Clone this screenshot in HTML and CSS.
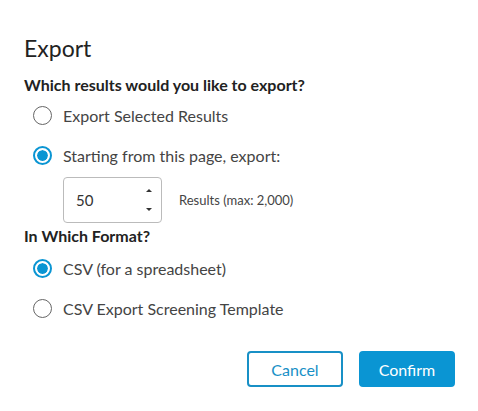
FILE: index.html
```html
<!DOCTYPE html>
<html>
<head>
<meta charset="utf-8">
<link rel="stylesheet" href="styles.css">
</head>
<body>
<div class="dialog">
  <h2 class="title">Export</h2>
  <div class="question">Which results would you like to export?</div>
  <div class="options">
    <label class="opt"><span class="radio"></span><span class="lbl">Export Selected Results</span></label>
    <label class="opt"><span class="radio on"></span><span class="lbl">Starting from this page, export:</span></label>
  </div>
  <div class="count-row">
    <div class="num">
      <span class="val">50</span>
      <span class="spin">
        <svg width="8" height="5" viewBox="0 0 8 5"><path d="M4 1 L7 4 L1 4 Z" fill="#333"/></svg>
        <svg width="8" height="5" viewBox="0 0 8 5"><path d="M1 1 L7 1 L4 4 Z" fill="#333"/></svg>
      </span>
    </div>
    <span class="hint">Results (max: 2,000)</span>
  </div>
  <div class="question q2">In Which Format?</div>
  <div class="options fmt">
    <label class="opt"><span class="radio on"></span><span class="lbl">CSV (for a spreadsheet)</span></label>
    <label class="opt"><span class="radio"></span><span class="lbl">CSV Export Screening Template</span></label>
  </div>
  <div class="actions">
    <button class="btn ghost">Cancel</button>
    <button class="btn primary">Confirm</button>
  </div>
</div>
</body>
</html>
```
FILE: styles.css
```css
* { box-sizing: border-box; }
html, body { margin: 0; padding: 0; background: #fff; }
body { font-family: Lato, "Open Sans", sans-serif; color: #333; }
.dialog { width: 478px; height: 411px; padding: 33px 23px 24px 24px; display: flex; flex-direction: column; }
.title { margin: 0; font-size: 23px; font-weight: 400; color: #222; line-height: 30px; }
.question { margin-top: 12px; font-size: 16px; font-weight: 700; color: #222; line-height: 20px; }
.options { display: flex; flex-direction: column; }
.fmt { margin-top: 2px; }
.opt { display: flex; align-items: center; gap: 11px; height: 40px; padding-left: 9px; font-size: 16px; color: #444; }
.radio { width: 19px; height: 19px; border: 1.5px solid #666; border-radius: 50%; flex: none; }
.radio.on { border: 2px solid #0a95d3; padding: 2px; background: #0a95d3; background-clip: content-box; box-shadow: inset 0 0 0 2px #fff; }
.count-row { display: flex; align-items: center; gap: 17px; padding-left: 39px; margin-top: 2px; }
.num { width: 99px; height: 46px; flex: none; border: 1px solid #bbb; border-radius: 4px; display: flex; align-items: center; justify-content: space-between; padding: 0 8px 0 12px; }
.val { font-size: 15px; color: #333; }
.spin { display: flex; flex-direction: column; gap: 14px; }
.hint { font-size: 13px; color: #444; }
.q2 { margin-top: 3px; }
.actions { margin-top: auto; display: flex; justify-content: flex-end; gap: 16px; }
.btn { width: 96px; height: 36px; border-radius: 4px; font-family: Lato, sans-serif; font-size: 16px; cursor: pointer; }
.ghost { background: #fff; border: 2px solid #1890c6; color: #1890c6; }
.primary { background: #0a95d3; border: 2px solid #0a95d3; color: #fff; }
```
